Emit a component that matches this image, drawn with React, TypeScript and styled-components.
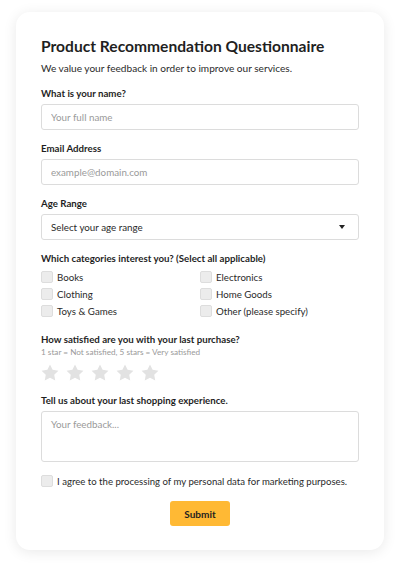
import React from "react";
import styled, { createGlobalStyle } from "styled-components";

const GlobalStyle = createGlobalStyle`
  * { box-sizing: border-box; }
  body {
    margin: 0;
    background: #ffffff;
    font-family: Lato, "Noto Sans", sans-serif;
    color: #222222;
  }
`;

const Page = styled.div`
  padding: 12px 16px 20px;
`;

const Card = styled.form`
  background: #ffffff;
  border-radius: 14px;
  box-shadow: 0 2px 14px rgba(0, 0, 0, 0.09);
  padding: 24px 25px 24px;
  display: flex;
  flex-direction: column;
`;

const Title = styled.h1`
  margin: 0;
  font-size: 15.6px;
  font-weight: 700;
  line-height: 20px;
  color: #1f1f1f;
`;

const Subtitle = styled.p`
  margin: 4px 0 0;
  font-size: 10.1px;
  line-height: 16px;
  color: #2a2a2a;
`;

const Field = styled.div<{ $gap?: number }>`
  margin-top: ${(p) => p.$gap ?? 11}px;
  display: flex;
  flex-direction: column;
`;

const Label = styled.label<{ $tight?: boolean }>`
  font-size: 9.7px;
  font-weight: 700;
  line-height: 14px;
  margin-bottom: ${(p) => (p.$tight ? 0 : 4)}px;
  color: #1f1f1f;
`;

const Input = styled.input`
  height: 26px;
  border: 1px solid #dcdcdc;
  border-radius: 3px;
  padding: 0 9px;
  font-family: inherit;
  font-size: 9.8px;
  color: #333;
  &::placeholder { color: #9a9a9a; }
`;

const SelectBox = styled.div`
  height: 26px;
  border: 1px solid #dcdcdc;
  border-radius: 3px;
  padding: 0 9px;
  display: flex;
  align-items: center;
  justify-content: space-between;
  font-size: 9.8px;
  color: #2a2a2a;
`;

const Caret = styled.span`
  width: 0;
  height: 0;
  border-left: 3.5px solid transparent;
  border-right: 3.5px solid transparent;
  border-top: 4px solid #222;
  margin-right: 4px;
`;

const CheckGrid = styled.div`
  display: grid;
  grid-template-columns: 1fr 1fr;
  row-gap: 1px;
`;

const CheckRow = styled.label`
  display: flex;
  align-items: center;
  gap: 4px;
  height: 16px;
  font-size: 9.7px;
  color: #2a2a2a;
  white-space: nowrap;
`;

const Box = styled.span`
  width: 12px;
  height: 12px;
  border-radius: 2px;
  background: #ececec;
  border: 1px solid #dddddd;
  flex-shrink: 0;
`;

const Hint = styled.div`
  font-size: 8.2px;
  color: #9a9a9a;
  line-height: 12px;
`;

const Stars = styled.div`
  display: flex;
  gap: 7px;
  margin-top: 6px;
`;

const TextArea = styled.textarea`
  height: 51px;
  border: 1px solid #dcdcdc;
  border-radius: 3px;
  padding: 6px 9px;
  font-family: inherit;
  font-size: 9.8px;
  resize: none;
  &::placeholder { color: #9a9a9a; }
`;

const Consent = styled(CheckRow)`
  margin-top: 11px;
  font-size: 9.6px;
`;

const SubmitRow = styled.div`
  display: flex;
  justify-content: center;
  margin-top: 12px;
`;

const SubmitButton = styled.button`
  width: 60px;
  height: 25px;
  border: none;
  border-radius: 3px;
  background: #ffb934;
  font-family: inherit;
  font-size: 10px;
  font-weight: 700;
  color: #1f1f1f;
`;

const Star: React.FC = () => (
  <svg width="18" height="17" viewBox="0 0 24 23">
    <path
      d="M12 0.6l3.5 7.3 7.9 1.1-5.7 5.5 1.4 7.9L12 18.6l-7.1 3.8 1.4-7.9L0.6 9l7.9-1.1z"
      fill="#e2e2e2"
    />
  </svg>
);

const categories = [
  "Books",
  "Electronics",
  "Clothing",
  "Home Goods",
  "Toys & Games",
  "Other (please specify)",
];

export default function App() {
  return (
    <Page>
      <GlobalStyle />
      <Card onSubmit={(e) => e.preventDefault()}>
        <Title>Product Recommendation Questionnaire</Title>
        <Subtitle>We value your feedback in order to improve our services.</Subtitle>

        <Field $gap={10}>
          <Label>What is your name?</Label>
          <Input placeholder="Your full name" />
        </Field>

        <Field>
          <Label>Email Address</Label>
          <Input placeholder="example@domain.com" />
        </Field>

        <Field>
          <Label>Age Range</Label>
          <SelectBox>
            Select your age range
            <Caret />
          </SelectBox>
        </Field>

        <Field>
          <Label>Which categories interest you? (Select all applicable)</Label>
          <CheckGrid>
            {categories.map((c) => (
              <CheckRow key={c}>
                <Box />
                {c}
              </CheckRow>
            ))}
          </CheckGrid>
        </Field>

        <Field $gap={13}>
          <Label $tight>How satisfied are you with your last purchase?</Label>
          <Hint>1 star = Not satisfied, 5 stars = Very satisfied</Hint>
          <Stars>
            {[1, 2, 3, 4, 5].map((n) => (
              <Star key={n} />
            ))}
          </Stars>
        </Field>

        <Field $gap={12}>
          <Label>Tell us about your last shopping experience.</Label>
          <TextArea placeholder="Your feedback..." />
        </Field>

        <Consent>
          <Box />
          I agree to the processing of my personal data for marketing purposes.
        </Consent>

        <SubmitRow>
          <SubmitButton type="submit">Submit</SubmitButton>
        </SubmitRow>
      </Card>
    </Page>
  );
}
